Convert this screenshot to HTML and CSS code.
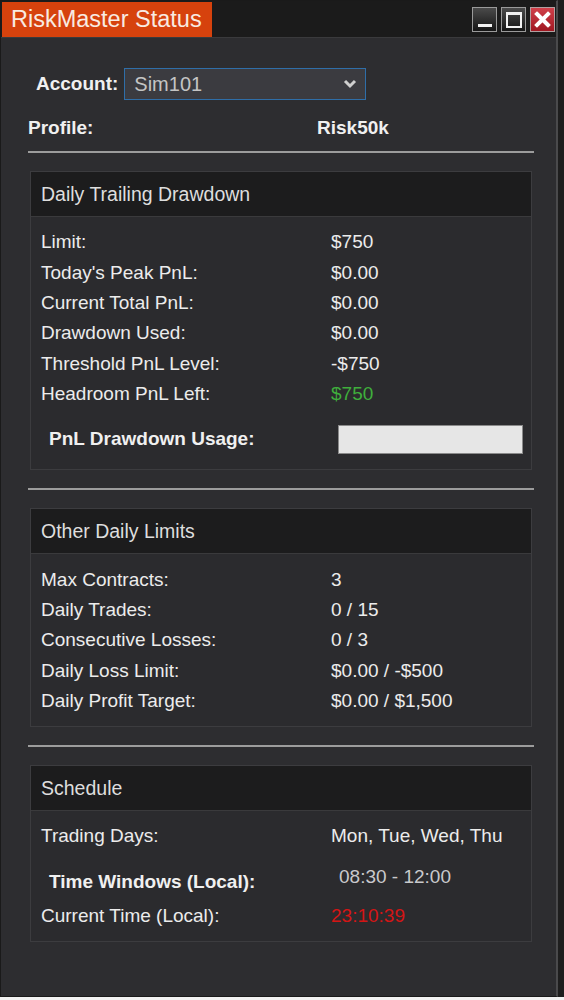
FILE: index.html
```html
<!DOCTYPE html>
<html>
<head>
<meta charset="utf-8">
<link rel="stylesheet" href="styles.css">
</head>
<body>
<div class="screen">
  <div class="window">
    <div class="titlebar">
      <div class="title-tab">RiskMaster Status</div>
      <div class="ctrls">
        <div class="ctrl ctrl-min"><span class="min-bar"></span></div>
        <div class="ctrl ctrl-max"><span class="max-box"></span></div>
        <div class="ctrl ctrl-close">
          <svg width="19" height="19" viewBox="0 0 19 19"><path d="M4 4 L15 15 M15 4 L4 15" stroke="#fff" stroke-width="4" stroke-linecap="square"/></svg>
        </div>
      </div>
    </div>
    <div class="content">
      <div class="account-row">
        <span class="bold-label">Account:</span>
        <div class="select">
          <span>Sim101</span>
          <svg width="14" height="10" viewBox="0 0 14 10"><path d="M2 2 L7 7 L12 2" fill="none" stroke="#cfcfcf" stroke-width="3"/></svg>
        </div>
      </div>
      <div class="profile-row">
        <span class="bold-label">Profile:</span>
        <span class="bold-label profile-val">Risk50k</span>
      </div>
      <div class="sep sep-first"></div>

      <div class="panel">
        <div class="panel-head">Daily Trailing Drawdown</div>
        <div class="panel-body">
          <div class="row"><span class="lbl">Limit:</span><span class="val">$750</span></div>
          <div class="row"><span class="lbl">Today's Peak PnL:</span><span class="val">$0.00</span></div>
          <div class="row"><span class="lbl">Current Total PnL:</span><span class="val">$0.00</span></div>
          <div class="row"><span class="lbl">Drawdown Used:</span><span class="val">$0.00</span></div>
          <div class="row"><span class="lbl">Threshold PnL Level:</span><span class="val">-$750</span></div>
          <div class="row"><span class="lbl">Headroom PnL Left:</span><span class="val green">$750</span></div>
          <div class="usage-row">
            <span class="bold-label usage-lbl">PnL Drawdown Usage:</span>
            <div class="usage-bar"></div>
          </div>
        </div>
      </div>

      <div class="sep"></div>

      <div class="panel">
        <div class="panel-head">Other Daily Limits</div>
        <div class="panel-body body-tight">
          <div class="row"><span class="lbl">Max Contracts:</span><span class="val">3</span></div>
          <div class="row"><span class="lbl">Daily Trades:</span><span class="val">0 / 15</span></div>
          <div class="row"><span class="lbl">Consecutive Losses:</span><span class="val">0 / 3</span></div>
          <div class="row"><span class="lbl">Daily Loss Limit:</span><span class="val">$0.00 / -$500</span></div>
          <div class="row"><span class="lbl">Daily Profit Target:</span><span class="val">$0.00 / $1,500</span></div>
        </div>
      </div>

      <div class="sep"></div>

      <div class="panel">
        <div class="panel-head">Schedule</div>
        <div class="panel-body body-tight">
          <div class="row"><span class="lbl">Trading Days:</span><span class="val">Mon, Tue, Wed, Thu</span></div>
          <div class="row row-tw"><span class="bold-label tw-lbl">Time Windows (Local):</span><span class="val tw-val">08:30 - 12:00</span></div>
          <div class="row row-ct"><span class="lbl">Current Time (Local):</span><span class="val red">23:10:39</span></div>
        </div>
      </div>
    </div>
  </div>
</div>
</body>
</html>
```

FILE: styles.css
```css
html, body {
  margin: 0;
  padding: 0;
}
body {
  background: #f2f2f2;
  font-family: "Liberation Sans", Arial, sans-serif;
  width: 564px;
  height: 1000px;
  overflow: hidden;
}
.screen {
  width: 564px;
  height: 997px;
  background: #1e1e1e;
}
.window {
  width: 555px;
  height: 995px;
  background: #2d2d30;
  border: 1px solid #1a1a1a;
  border-right: 2px solid #4a4a4c;
  box-sizing: content-box;
}
.titlebar {
  height: 36px;
  background: #1b1b1b;
  border-bottom: 1px solid #3a3a3c;
  display: flex;
  align-items: flex-start;
  justify-content: space-between;
}
.title-tab {
  margin: 1px 0 0 1px;
  width: 201px;
  height: 35px;
  padding-left: 9px;
  background: #d6420d;
  color: #f8ebe2;
  font-size: 23.5px;
  line-height: 35px;
  white-space: nowrap;
}
.ctrls {
  display: flex;
  gap: 4px;
  margin-top: 6px;
  margin-right: 1px;
}
.ctrl {
  width: 23px;
  height: 23px;
  border: 1px solid #9a9a9a;
  background: linear-gradient(#4a4a4a, #151515);
  display: flex;
  align-items: center;
  justify-content: center;
  position: relative;
}
.min-bar {
  position: absolute;
  left: 5px;
  bottom: 4px;
  width: 14px;
  height: 3px;
  background: #f2f2f2;
}
.max-box {
  width: 12px;
  height: 11px;
  border: 2px solid #f2f2f2;
  border-top-width: 3px;
}
.ctrl-close {
  background: linear-gradient(#d0404a, #a01822);
  border-color: #b0a0a0;
}
.content {
  padding: 0 22px 0 27px;
}
.bold-label {
  font-weight: bold;
  color: #f0f0f0;
  font-size: 19px;
}
.account-row {
  display: flex;
  align-items: center;
  margin-top: 30px;
  padding-left: 8px;
  gap: 6px;
}
.select {
  display: flex;
  align-items: center;
  justify-content: space-between;
  padding: 0 8px 0 9px;
  box-sizing: border-box;
  width: 242px;
  height: 32px;
  border: 1px solid #2f6ea8;
  background: #3b3b40;
  color: #c4c4c4;
  font-size: 20px;
}
.profile-row {
  display: flex;
  align-items: center;
  height: 24px;
  margin-top: 16px;
}
.profile-row .bold-label:first-child {
  width: 289px;
}
.sep {
  height: 2px;
  background: #9c9c9c;
  margin: 18px 0 18px;
}
.sep-first {
  margin: 11px 0 18px;
}
.panel {
  margin: 0 2px;
  border: 1px solid #3c3c3f;
  background: #2b2b2e;
}
.panel-head {
  height: 44px;
  background: #1c1c1d;
  border-bottom: 1px solid #3a3a3c;
  color: #dedede;
  font-size: 19.5px;
  line-height: 44px;
  padding-left: 10px;
}
.panel-body {
  padding: 10px 0 15px 10px;
}
.body-tight {
  padding-bottom: 10px;
}
.row {
  display: flex;
  align-items: center;
  height: 30.4px;
  font-size: 19px;
  color: #ececec;
}
.lbl {
  width: 290px;
  white-space: nowrap;
}
.val {
  white-space: nowrap;
}
.green {
  color: #3fae3c;
}
.red {
  color: #d41515;
}
.usage-row {
  display: flex;
  align-items: center;
  margin-top: 15px;
  height: 30px;
}
.usage-lbl {
  width: 289px;
  padding-left: 8px;
}
.usage-bar {
  width: 183px;
  height: 27px;
  background: #e6e6e6;
  border: 1px solid #8a8a8a;
}
.row-tw {
  margin-top: 15px;
}
.tw-lbl {
  width: 290px;
  padding-left: 8px;
}
.tw-val {
  color: #c9c9cc;
  margin-top: -9px;
}
.row-ct {
  margin-top: 4px;
}
```
